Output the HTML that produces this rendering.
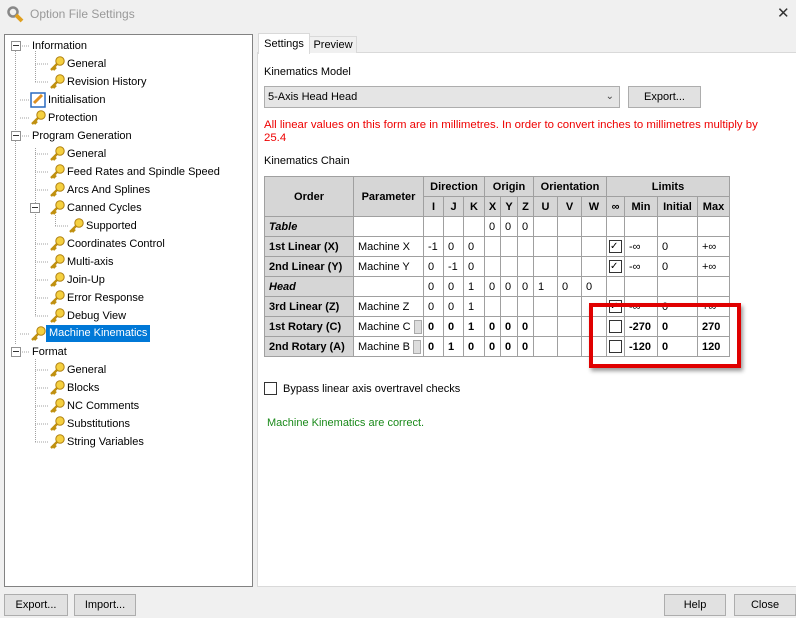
<!DOCTYPE html>
<html><head><style>
body{margin:0;width:796px;height:618px;background:#f0f0f0;font-family:"Liberation Sans",sans-serif;font-size:11px;color:#000;position:relative;overflow:hidden}
.a{position:absolute;white-space:nowrap}
.tree{position:absolute;left:4px;top:34px;width:247px;height:551px;background:#fff;border:1px solid #828282}
.it{position:absolute;height:16px;line-height:18px}
.exp{position:absolute;width:8px;height:8px;border:1px solid #919191;background:#fff}
.exp:after{content:"";position:absolute;left:1px;top:3px;width:6px;height:1px;background:#333}
.panel{position:absolute;left:257px;top:52px;width:538px;height:533px;background:#fff;border:1px solid #d9d9d9}
table{position:absolute;left:264px;top:176px;border-collapse:collapse;table-layout:fixed;font-size:11px}
td{border:1px solid #a0a0a0;height:19px;padding:0 0 0 4px;overflow:hidden;white-space:nowrap;background:#fff}
td.h{background:#d6d6d6;font-weight:bold;text-align:center;padding:0}
td.o{background:#d6d6d6;font-weight:bold}
tr.b td{font-weight:bold}
.cb{display:inline-block;width:11px;height:11px;border:1px solid #333;vertical-align:middle;position:relative;background:#fff;line-height:11px;font-size:10px}
.btn{position:absolute;background:#e1e1e1;border:1px solid #adadad;text-align:center;line-height:20px;height:20px}
</style></head><body>
<svg class="a" style="left:7px;top:6px" width="18" height="18" viewBox="0 0 18 18"><circle cx="6" cy="6" r="4.5" fill="none" stroke="#888" stroke-width="2.5"/><path d="M9 9 L15 15" stroke="#e0a020" stroke-width="4"/></svg>
<div class="a" style="left:30px;top:7px;font-size:12px;color:#999">Option File Settings</div>
<div class="a" style="left:777px;top:4px;font-size:15px;color:#333">✕</div>

<div class="tree">
<svg width="247" height="551" style="position:absolute;left:0;top:0">
<defs><g id="k"><circle cx="11" cy="5" r="4.2" fill="#f5d040" stroke="#b08010"/><path d="M8 8 L2 14 M4 12 L6 14 M5 11 L7 13" stroke="#c09010" stroke-width="2.4" fill="none"/></g></defs>
<g fill="none" stroke="#a0a0a0" stroke-dasharray="1,1">
<path d="M10.5 16 V310 M30.5 16 V47 M30.5 113 V280 M50.5 180 V191 M30.5 324 V407"/>
<path d="M15 11H25 M15 65H25 M15 83H25 M15 101H25 M15 299H25 M15 317H25 M30 29H44 M30 47H44 M30 119H44 M30 137H44 M30 155H44 M50 191H64 M30 209H44 M30 227H44 M30 245H44 M30 263H44 M30 281H44 M30 335H44 M30 353H44 M30 371H44 M30 389H44 M30 407H44"/>
</g>
<g>
<use href="#k" x="44" y="21"/><use href="#k" x="44" y="39"/><use href="#k" x="25" y="75"/>
<use href="#k" x="44" y="111"/><use href="#k" x="44" y="129"/><use href="#k" x="44" y="147"/><use href="#k" x="44" y="165"/><use href="#k" x="63" y="183"/><use href="#k" x="44" y="201"/><use href="#k" x="44" y="219"/><use href="#k" x="44" y="237"/><use href="#k" x="44" y="255"/><use href="#k" x="44" y="273"/><use href="#k" x="25" y="291"/>
<use href="#k" x="44" y="327"/><use href="#k" x="44" y="345"/><use href="#k" x="44" y="363"/><use href="#k" x="44" y="381"/><use href="#k" x="44" y="399"/>
</g>
<rect x="26" y="58" width="14" height="14" fill="#fff" stroke="#2a6ac0" stroke-width="1.5"/><path d="M29 68 L37 60" stroke="#e09020" stroke-width="3"/>
</svg>
<div class="exp" style="left:6px;top:6px"></div>
<div class="exp" style="left:6px;top:96px"></div>
<div class="exp" style="left:25px;top:168px"></div>
<div class="exp" style="left:6px;top:312px"></div>
<div class="it" style="left:27px;top:2px">Information</div>
<div class="it" style="left:62px;top:20px">General</div>
<div class="it" style="left:62px;top:38px">Revision History</div>
<div class="it" style="left:43px;top:56px">Initialisation</div>
<div class="it" style="left:43px;top:74px">Protection</div>
<div class="it" style="left:27px;top:92px">Program Generation</div>
<div class="it" style="left:62px;top:110px">General</div>
<div class="it" style="left:62px;top:128px">Feed Rates and Spindle Speed</div>
<div class="it" style="left:62px;top:146px">Arcs And Splines</div>
<div class="it" style="left:62px;top:164px">Canned Cycles</div>
<div class="it" style="left:81px;top:182px">Supported</div>
<div class="it" style="left:62px;top:200px">Coordinates Control</div>
<div class="it" style="left:62px;top:218px">Multi-axis</div>
<div class="it" style="left:62px;top:236px">Join-Up</div>
<div class="it" style="left:62px;top:254px">Error Response</div>
<div class="it" style="left:62px;top:272px">Debug View</div>
<div class="it" style="left:41px;top:290px;background:#0078d7;color:#fff;padding:0 3px;height:17px;line-height:17px">Machine Kinematics</div>
<div class="it" style="left:27px;top:308px">Format</div>
<div class="it" style="left:62px;top:326px">General</div>
<div class="it" style="left:62px;top:344px">Blocks</div>
<div class="it" style="left:62px;top:362px">NC Comments</div>
<div class="it" style="left:62px;top:380px">Substitutions</div>
<div class="it" style="left:62px;top:398px">String Variables</div>
</div>

<div class="panel"></div>
<div class="a" style="left:258px;top:33px;width:50px;height:20px;background:#fff;border:1px solid #d9d9d9;border-bottom:none;text-align:center;line-height:20px">Settings</div>
<div class="a" style="left:309px;top:36px;width:46px;height:16px;background:#f0f0f0;border:1px solid #d9d9d9;border-bottom:none;text-align:center;line-height:17px">Preview</div>

<div class="a" style="left:264px;top:66px">Kinematics Model</div>
<div class="a" style="left:264px;top:86px;width:354px;height:20px;background:#e5e5e5;border:1px solid #adadad;line-height:20px;text-indent:3px">5-Axis Head Head<span style="position:absolute;right:5px;top:0;font-size:10px;color:#444">&#8964;</span></div>
<div class="btn" style="left:628px;top:86px;width:71px">Export...</div>
<div class="a" style="left:264px;top:119px;color:#e00;line-height:13px;font-size:11.4px">All linear values on this form are in millimetres. In order to convert inches to millimetres multiply by<br>25.4</div>
<div class="a" style="left:264px;top:155px">Kinematics Chain</div>

<table>
<colgroup><col style="width:89px"><col style="width:70px"><col style="width:20px"><col style="width:20px"><col style="width:21px"><col style="width:16px"><col style="width:17px"><col style="width:16px"><col style="width:24px"><col style="width:24px"><col style="width:25px"><col style="width:18px"><col style="width:33px"><col style="width:40px"><col style="width:32px"></colgroup>
<tr><td class="h" rowspan="2">Order</td><td class="h" rowspan="2">Parameter</td><td class="h" colspan="3">Direction</td><td class="h" colspan="3">Origin</td><td class="h" colspan="3">Orientation</td><td class="h" colspan="4">Limits</td></tr>
<tr><td class="h">I</td><td class="h">J</td><td class="h">K</td><td class="h">X</td><td class="h">Y</td><td class="h">Z</td><td class="h">U</td><td class="h">V</td><td class="h">W</td><td class="h">∞</td><td class="h">Min</td><td class="h">Initial</td><td class="h">Max</td></tr>
<tr><td class="o"><i>Table</i></td><td></td><td></td><td></td><td></td><td>0</td><td>0</td><td>0</td><td></td><td></td><td></td><td></td><td></td><td></td><td></td></tr>
<tr><td class="o">1st Linear (X)</td><td>Machine X</td><td>-1</td><td>0</td><td>0</td><td></td><td></td><td></td><td></td><td></td><td></td><td style="padding:0 2px"><span class="cb">✓</span></td><td>-∞</td><td>0</td><td>+∞</td></tr>
<tr><td class="o">2nd Linear (Y)</td><td>Machine Y</td><td>0</td><td>-1</td><td>0</td><td></td><td></td><td></td><td></td><td></td><td></td><td style="padding:0 2px"><span class="cb">✓</span></td><td>-∞</td><td>0</td><td>+∞</td></tr>
<tr><td class="o"><i>Head</i></td><td></td><td>0</td><td>0</td><td>1</td><td>0</td><td>0</td><td>0</td><td>1</td><td>0</td><td>0</td><td></td><td></td><td></td><td></td></tr>
<tr><td class="o">3rd Linear (Z)</td><td>Machine Z</td><td>0</td><td>0</td><td>1</td><td></td><td></td><td></td><td></td><td></td><td></td><td style="padding:0 2px"><span class="cb">✓</span></td><td>-∞</td><td>0</td><td>+∞</td></tr>
<tr class="b"><td class="o">1st Rotary (C)</td><td style="font-weight:normal">Machine C <span style="display:inline-block;width:6px;height:12px;background:#ddd;border:1px solid #aaa;vertical-align:middle"></span></td><td>0</td><td>0</td><td>1</td><td>0</td><td>0</td><td>0</td><td></td><td></td><td></td><td style="padding:0 2px"><span class="cb"></span></td><td>-270</td><td>0</td><td>270</td></tr>
<tr class="b"><td class="o">2nd Rotary (A)</td><td style="font-weight:normal">Machine B <span style="display:inline-block;width:6px;height:12px;background:#ddd;border:1px solid #aaa;vertical-align:middle"></span></td><td>0</td><td>1</td><td>0</td><td>0</td><td>0</td><td>0</td><td></td><td></td><td></td><td style="padding:0 2px"><span class="cb"></span></td><td>-120</td><td>0</td><td>120</td></tr>
</table>
<div class="a" style="left:589px;top:303px;width:144px;height:57px;border:4px solid #e00000;box-shadow:2px 3px 4px rgba(0,0,0,.4)"></div>

<div class="a" style="left:264px;top:382px;width:11px;height:11px;border:1px solid #333;background:#fff"></div>
<div class="a" style="left:283px;top:383px">Bypass linear axis overtravel checks</div>
<div class="a" style="left:267px;top:417px;color:#1a8a1a">Machine Kinematics are correct.</div>

<div class="btn" style="left:4px;top:594px;width:62px">Export...</div>
<div class="btn" style="left:74px;top:594px;width:60px">Import...</div>
<div class="btn" style="left:664px;top:594px;width:60px">Help</div>
<div class="btn" style="left:734px;top:594px;width:60px">Close</div>
</body></html>
